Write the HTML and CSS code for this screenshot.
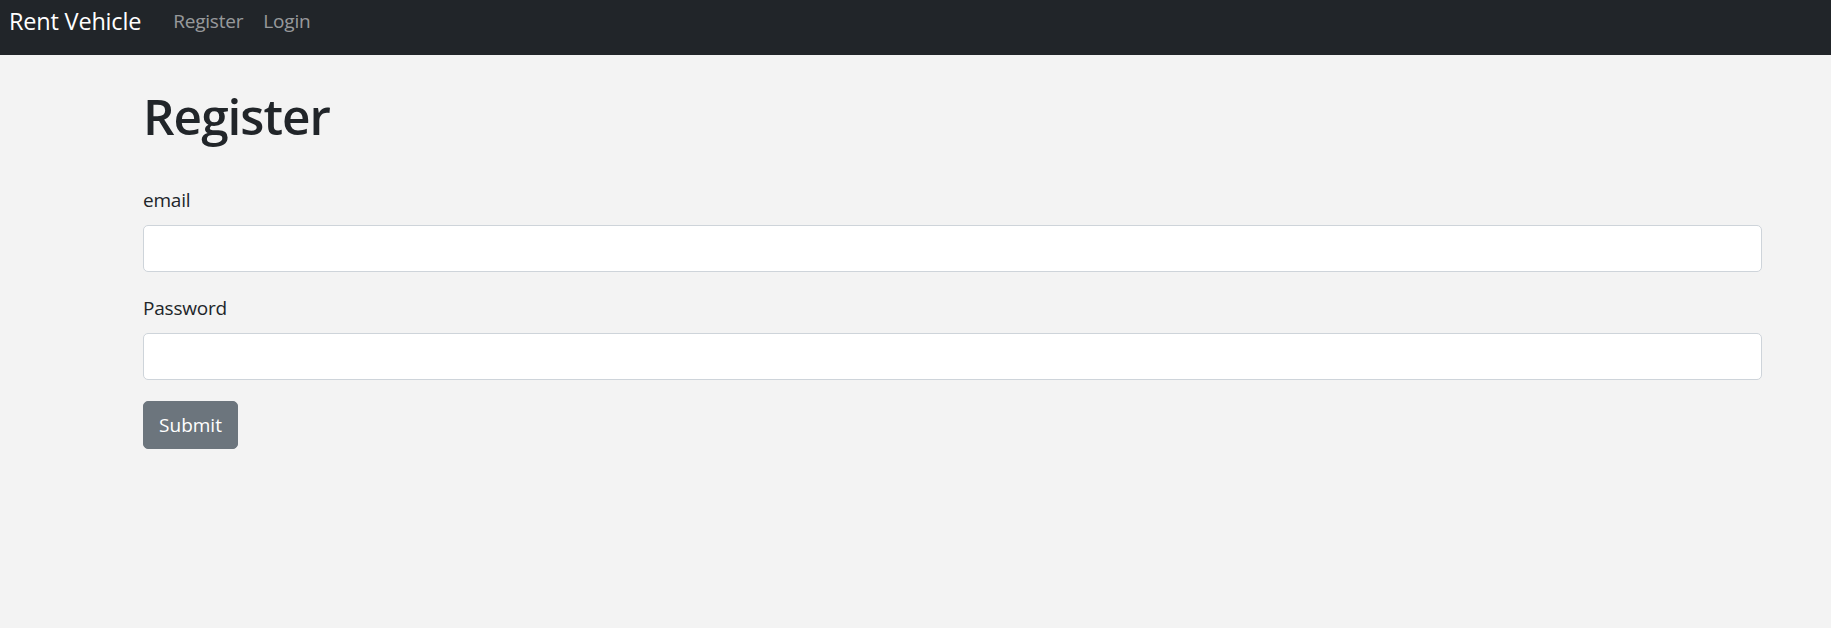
FILE: index.html
```html
<!DOCTYPE html>
<html lang="en">
<head>
<meta charset="utf-8">
<title>Rent Vehicle - Register</title>
<link rel="stylesheet" href="styles.css">
</head>
<body>
<nav class="navbar">
  <a class="brand" href="#">Rent Vehicle</a>
  <ul class="nav">
    <li><a class="nav-link" href="#">Register</a></li>
    <li><a class="nav-link" href="#">Login</a></li>
  </ul>
</nav>
<main class="container">
  <h1 class="title">Register</h1>
  <form class="form">
    <div class="field">
      <label class="label" for="email">email</label>
      <input class="input" id="email" type="email">
    </div>
    <div class="field">
      <label class="label" for="password">Password</label>
      <input class="input" id="password" type="password">
    </div>
    <button class="btn" type="button">Submit</button>
  </form>
</main>
</body>
</html>
```

FILE: styles.css
```css
* { box-sizing: border-box; }
html, body { margin: 0; padding: 0; }
body {
  background: #f3f3f3;
  font-family: "Open Sans", "Noto Sans", sans-serif;
  font-size: 19px;
  letter-spacing: -0.2px;
  line-height: 30px;
  color: #212529;
  height: 628px;
}
.navbar {
  height: 55px;
  background: #212529;
  display: flex;
  align-items: flex-start;
  padding-left: 9px;
  padding-top: 6px;
}
.brand {
  font-size: 23.5px;
  line-height: 30px;
  color: #fff;
  text-decoration: none;
  margin-right: 22px;
}
.nav {
  list-style: none;
  margin: 0;
  padding: 0;
  display: flex;
}
.nav-link {
  display: block;
  padding: 0 10px;
  font-size: 19px;
  line-height: 30px;
  color: rgba(255, 255, 255, 0.55);
  text-decoration: none;
}
.container {
  padding: 0 69px 0 143px;
}
.title {
  margin: 30px 0 0 0;
  font-size: 49.5px;
  line-height: 62px;
  font-weight: 600;
  letter-spacing: -1px;
}
.form { margin-top: 38px; }
.field { margin-bottom: 21px; }
.label {
  display: block;
  margin-bottom: 10px;
}
.input {
  display: block;
  width: 100%;
  height: 47px;
  border: 1px solid #ced4da;
  border-radius: 5px;
  background: #fff;
  font: inherit;
  padding: 7px 15px;
}
.btn {
  display: block;
  height: 48px;
  width: 95px;
  padding: 0;
  border: 1px solid #6c757d;
  border-radius: 5px;
  background: #6c757d;
  color: #fff;
  font: inherit;
}
```
